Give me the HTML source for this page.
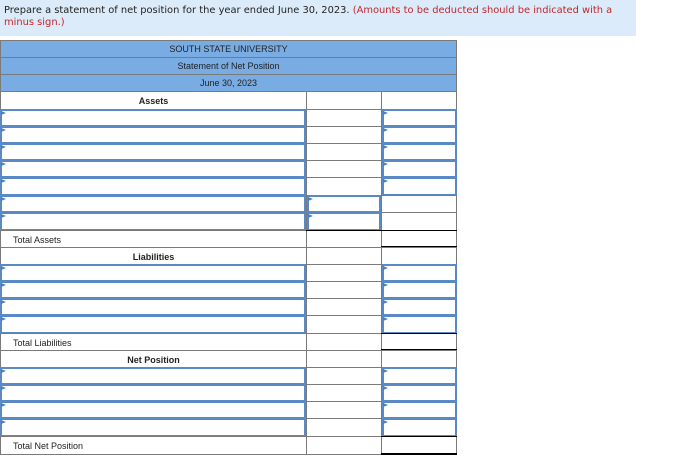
<!DOCTYPE html>
<html><head><style>
body{margin:0;width:677px;height:458px;background:#fff;font-family:"Liberation Sans",Arial,sans-serif;position:relative;overflow:hidden}
.info{position:absolute;left:0;top:0;width:636px;height:36px;background:#dcebf9;font-family:"DejaVu Sans",Verdana,sans-serif;font-size:9.9px;line-height:12px;color:#222;padding:5px 20px 0 4px;box-sizing:border-box}
.info span{color:#c0282d}
.c{position:absolute;box-sizing:border-box;border:1px solid #7a7a7a;font-size:9px;color:#222}
.h{background:#79ace3;text-align:center;font-size:9px;line-height:17px}
.in{position:absolute;box-sizing:border-box;border:2px solid #5a8ac6;background:#fff}
.in:after{content:"";position:absolute;left:-1px;top:0;border-left:5px solid #4a7fc4;border-top:2.5px solid transparent;border-bottom:2.5px solid transparent}
.blk{position:absolute;background:#000}
b{font-weight:bold}
</style></head><body>
<div class="info">Prepare a statement of net position for the year ended June 30, 2023. <span>(Amounts to be deducted should be indicated with a minus sign.)</span></div>
<div class="c h" style="left:0;top:40px;width:457px;height:18px">SOUTH STATE UNIVERSITY</div>
<div class="c h" style="left:0;top:57px;width:457px;height:18px">Statement of Net Position</div>
<div class="c h" style="left:0;top:74px;width:457px;height:18px">June 30, 2023</div>
<div id="g"></div>
<script>
var ys=[91,109,126,143,160,177,195,212,230,247,264,281,298,315,333,350,367,384,401,418,436,454];
var types=['Assets','i3','i3','i3','i3','i3','i2','i2','T:Total Assets','Liabilities','i3','i3','i3','i3','T:Total Liabilities','Net Position','i3','i3','i3','i3','T:Total Net Position'];
var h='';
for(var k=0;k<types.length;k++){
 var y=ys[k],hh=ys[k+1]-y+1,t=types[k];
 var lab='',st='';
 if(t.indexOf('T:')==0){lab=t.slice(2);st='padding-left:12px;line-height:'+(hh)+'px';}
 else if(t[0]!='i'){lab='<b>'+t+'</b>';st='text-align:center;line-height:'+(hh)+'px';}
 h+='<div class="c" style="left:0;top:'+y+'px;width:307px;height:'+hh+'px;'+st+'">'+lab+'</div>';
 h+='<div class="c" style="left:306px;top:'+y+'px;width:76px;height:'+hh+'px"></div>';
 h+='<div class="c" style="left:381px;top:'+y+'px;width:76px;height:'+hh+'px"></div>';
 if(t[0]=='i'){
  h+='<div class="in" style="left:0;top:'+y+'px;width:306px;height:'+hh+'px"></div>';
  if(t=='i3')h+='<div class="in" style="left:382px;top:'+y+'px;width:75px;height:'+hh+'px"></div>';
  else h+='<div class="in" style="left:307px;top:'+y+'px;width:74px;height:'+hh+'px"></div>';
 }
 if(t.indexOf('T:')==0){
  h+='<div class="blk" style="left:381px;top:'+y+'px;width:76px;height:1px"></div>';
  h+='<div class="blk" style="left:381px;top:'+(ys[k+1]-1)+'px;width:76px;height:2px"></div>';
  if(k==8)h+='<div class="blk" style="left:306px;top:'+y+'px;width:76px;height:1px"></div>';
 }
}
document.getElementById('g').innerHTML=h;
</script>
</body></html>
